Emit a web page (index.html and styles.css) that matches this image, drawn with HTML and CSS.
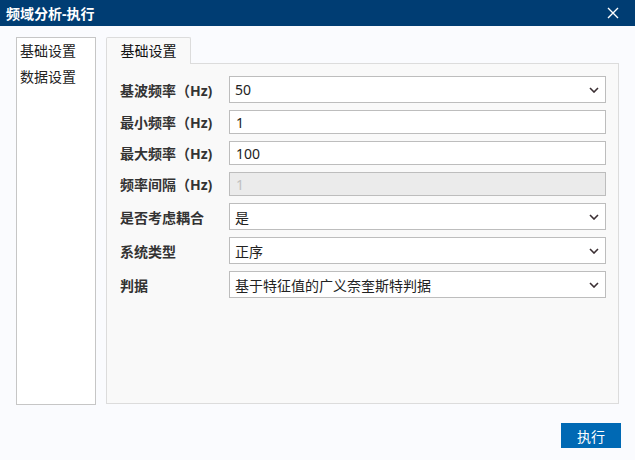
FILE: index.html
```html
<!DOCTYPE html>
<html lang="zh-CN">
<head>
    <meta charset="UTF-8">
    <meta name="viewport" content="width=device-width, initial-scale=1.0">
    <title>频域分析-执行</title>
    <link rel="stylesheet" href="styles.css">
</head>
<body>

    <div class="titlebar">
        <span class="title">频域分析-执行</span>
        <svg class="close" width="12" height="12" viewBox="0 0 12 12">
            <path d="M1 1 L11 11 M11 1 L1 11" stroke="#fff" stroke-width="1.4" fill="none"/>
        </svg>
    </div>

    <div class="main">
        <div class="side">
            <div class="side-item">基础设置</div>
            <div class="side-item">数据设置</div>
        </div>

        <div class="tabs">
            <div class="tab-head">
                <div class="tab active">基础设置</div>
                <div class="tab-rest"></div>
            </div>
            <div class="tab-body">
                <div class="form">
                    <label class="label">基波频率（Hz)</label>
                    <div class="select"><span>50</span><svg class="chev" width="10" height="6" viewBox="0 0 10 6"><path d="M1 1 L5 5 L9 1" stroke="#3b2f33" stroke-width="1.6" fill="none"/></svg></div>

                    <label class="label">最小频率（Hz)</label>
                    <div class="input">1</div>

                    <label class="label">最大频率（Hz)</label>
                    <div class="input">100</div>

                    <label class="label">频率间隔（Hz)</label>
                    <div class="input disabled">1</div>

                    <label class="label">是否考虑耦合</label>
                    <div class="select"><span>是</span><svg class="chev" width="10" height="6" viewBox="0 0 10 6"><path d="M1 1 L5 5 L9 1" stroke="#3b2f33" stroke-width="1.6" fill="none"/></svg></div>

                    <label class="label">系统类型</label>
                    <div class="select"><span>正序</span><svg class="chev" width="10" height="6" viewBox="0 0 10 6"><path d="M1 1 L5 5 L9 1" stroke="#3b2f33" stroke-width="1.6" fill="none"/></svg></div>

                    <label class="label">判据</label>
                    <div class="select"><span>基于特征值的广义奈奎斯特判据</span><svg class="chev" width="10" height="6" viewBox="0 0 10 6"><path d="M1 1 L5 5 L9 1" stroke="#3b2f33" stroke-width="1.6" fill="none"/></svg></div>
                </div>
            </div>
        </div>
    </div>

    <div class="footer">
        <button class="run-button">执行</button>
    </div>

</body>
</html>
```

FILE: styles.css
```css
body {
    font-family: "Noto Sans", "Noto Sans CJK SC", sans-serif;
    font-size: 14px;
    background-color: #fafbfe;
    margin: 0;
    width: 635px;
    height: 460px;
    overflow: hidden;
    color: #222;
}
.titlebar {
    height: 26px;
    background-color: #003d73;
    display: flex;
    align-items: center;
    justify-content: space-between;
    padding: 0 16px 0 6px;
}
.title {
    color: white;
    font-weight: bold;
    font-size: 14px;
}
.main {
    display: flex;
    gap: 10px;
    padding: 11px 16px 0 16px;
}
.side {
    width: 78px;
    height: 366px;
    background-color: white;
    border: 1px solid #c6c6c6;
}
.side-item {
    height: 26px;
    line-height: 26px;
    padding-left: 3px;
    color: #222;
}
.tabs {
    width: 513px;
    display: flex;
    flex-direction: column;
}
.tab-head {
    display: flex;
    height: 27px;
}
.tab {
    width: 83px;
    border: 1px solid #dcdcdc;
    border-bottom: none;
    border-radius: 2px 2px 0 0;
    background-color: #f9f9f9;
    text-align: center;
    line-height: 26px;
    color: #111;
}
.tab-rest {
    flex-grow: 1;
    border-bottom: 1px solid #dcdcdc;
}
.tab-body {
    box-sizing: border-box;
    height: 340px;
    background-color: #f9f9f9;
    border: 1px solid #dcdcdc;
    border-top: none;
    padding: 12px 12px 0 13px;
}
.form {
    display: grid;
    grid-template-columns: 109px 377px;
    row-gap: 7px;
    align-items: center;
}
.label {
    font-weight: bold;
    color: #333;
}
.input,
.select {
    box-sizing: border-box;
    background-color: white;
    border: 1px solid #bdbdbd;
    color: #222;
    display: flex;
    align-items: center;
}
.input {
    height: 24px;
    padding-left: 6px;
}
.input.disabled {
    background-color: #ebebeb;
    color: #c0c0c0;
}
.select {
    height: 27px;
    padding: 0 6px 0 5px;
    justify-content: space-between;
}
.chev {
    display: block;
}
.footer {
    display: flex;
    justify-content: flex-end;
    padding: 18px 14px 0 0;
}
.run-button {
    width: 60px;
    height: 25px;
    background-color: #0069b4;
    color: white;
    font-family: "Noto Sans", "Noto Sans CJK SC", sans-serif;
    font-size: 14px;
    border: none;
    padding: 0;
    cursor: pointer;
}
```
